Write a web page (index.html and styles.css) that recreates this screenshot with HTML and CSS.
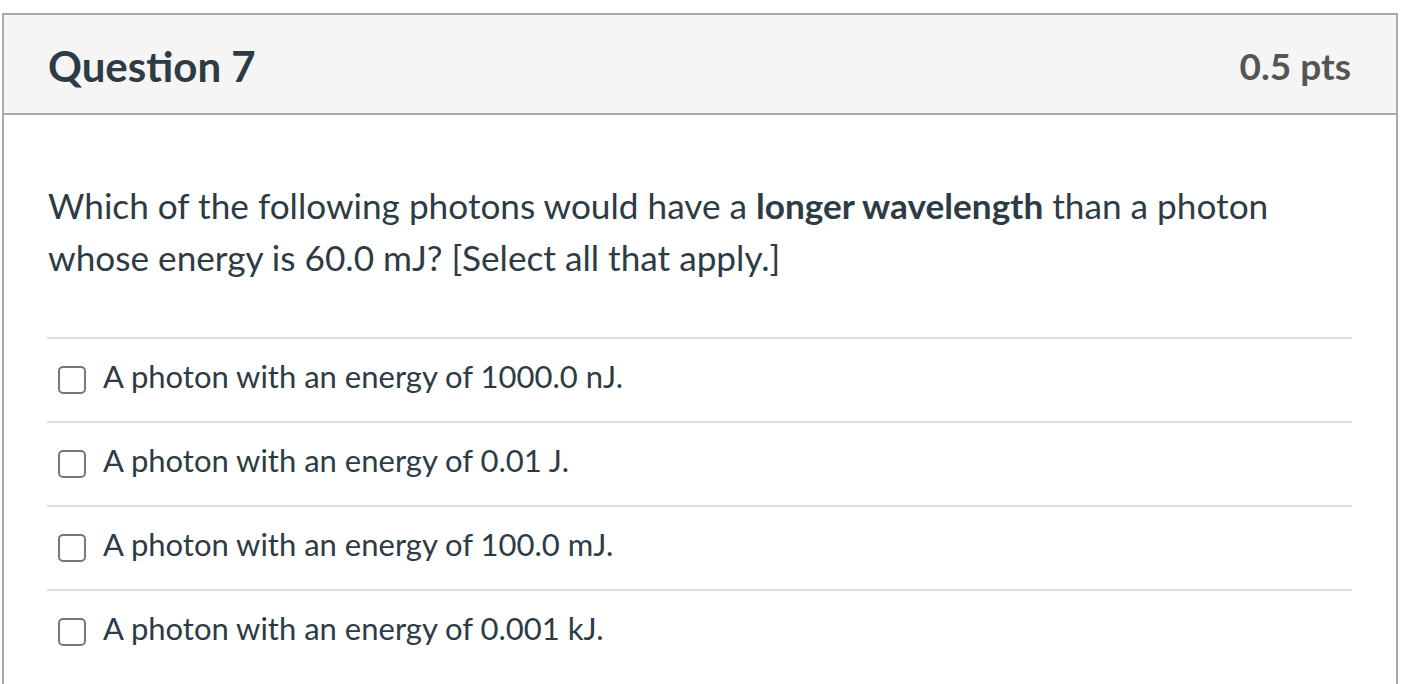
FILE: index.html
```html
<!DOCTYPE html>
<html>
<head>
<meta charset="utf-8">
<link rel="stylesheet" href="styles.css">
</head>
<body>
<div class="question">
  <div class="question-header">
    <h2 class="question-title">Question 7</h2>
    <span class="question-points">0.5 pts</span>
  </div>
  <div class="question-body">
    <p class="question-text">Which of the following photons would have a <strong>longer wavelength</strong> than a photon whose energy is 60.0 mJ? [Select all that apply.]</p>
    <div class="answers">
      <label class="answer"><span class="checkbox"></span><span class="answer-text">A photon with an energy of 1000.0 nJ.</span></label>
      <label class="answer"><span class="checkbox"></span><span class="answer-text">A photon with an energy of 0.01 J.</span></label>
      <label class="answer"><span class="checkbox"></span><span class="answer-text">A photon with an energy of 100.0 mJ.</span></label>
      <label class="answer"><span class="checkbox"></span><span class="answer-text">A photon with an energy of 0.001 kJ.</span></label>
    </div>
  </div>
</div>
</body>
</html>
```
FILE: styles.css
```css
html, body {
  margin: 0;
  padding: 0;
  background: #ffffff;
}
body {
  font-family: Lato, "Open Sans", "Liberation Sans", sans-serif;
  color: #2d3b45;
}
.question {
  margin: 13px 0 0 2px;
  width: 1396px;
  box-sizing: border-box;
  border: 2px solid #aaaaaa;
  border-bottom: none;
  min-height: 700px;
}
.question-header {
  display: flex;
  align-items: center;
  justify-content: space-between;
  height: 100px;
  padding: 3px 45px 0 44px;
  box-sizing: border-box;
  background: #f5f5f5;
  border-bottom: 2px solid #aaaaaa;
}
.question-title {
  margin: 0;
  font-size: 42px;
  font-weight: 700;
  color: #2d3b45;
}
.question-points {
  font-size: 37px;
  font-weight: 700;
  color: #555555;
}
.question-body {
  padding: 64px 44px 0 43px;
}
.question-text {
  margin: 0 0 54px 0;
  padding-left: 1px;
  font-size: 35.2px;
  line-height: 52px;
}
.question-text strong {
  font-weight: 700;
}
.answer {
  display: flex;
  align-items: center;
  gap: 17px;
  height: 82px;
  border-top: 2px solid #dddddd;
  padding-left: 11px;
}
.checkbox {
  width: 24px;
  height: 24px;
  border: 2px solid #777777;
  border-radius: 5px;
  flex: none;
}
.answer-text {
  font-size: 31px;
  line-height: 40px;
  margin-top: -8px;
}
```
